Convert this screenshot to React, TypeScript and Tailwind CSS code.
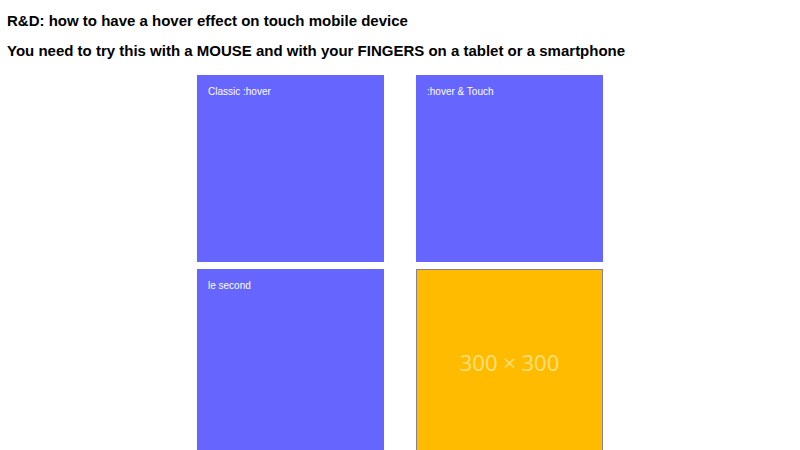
export default function App() {
  return (
    <div className="min-h-screen bg-white text-black px-[7px] pt-[12px]" style={{ fontFamily: '"Liberation Sans", Arial, sans-serif' }}>
      <h1 className="text-[15px] font-bold leading-[17px]">R&amp;D: how to have a hover effect on touch mobile device</h1>
      <h2 className="mt-[13px] text-[15px] font-bold leading-[17px]">
        You need to try this with a MOUSE and with your FINGERS on a tablet or a smartphone
      </h2>
      <div className="mt-[16px] grid grid-cols-[187px_187px] gap-x-[32px] gap-y-[7px] justify-center">
        <div className="h-[187px] bg-[#6666ff] px-[11px] pt-[9px] text-[10px] text-white">Classic :hover</div>
        <div className="h-[187px] bg-[#6666ff] px-[11px] pt-[9px] text-[10px] text-white">:hover &amp; Touch</div>
        <div className="h-[187px] bg-[#6666ff] px-[11px] pt-[9px] text-[10px] text-white">le second</div>
        <div className="h-[187px] bg-[#ffbb00] border border-[#8a7f93] flex items-center justify-center">
          <span className="text-[22px] font-normal text-[#ffe07a]" style={{ fontFamily: '"Open Sans", sans-serif' }}>
            300 × 300
          </span>
        </div>
      </div>
    </div>
  );
}
